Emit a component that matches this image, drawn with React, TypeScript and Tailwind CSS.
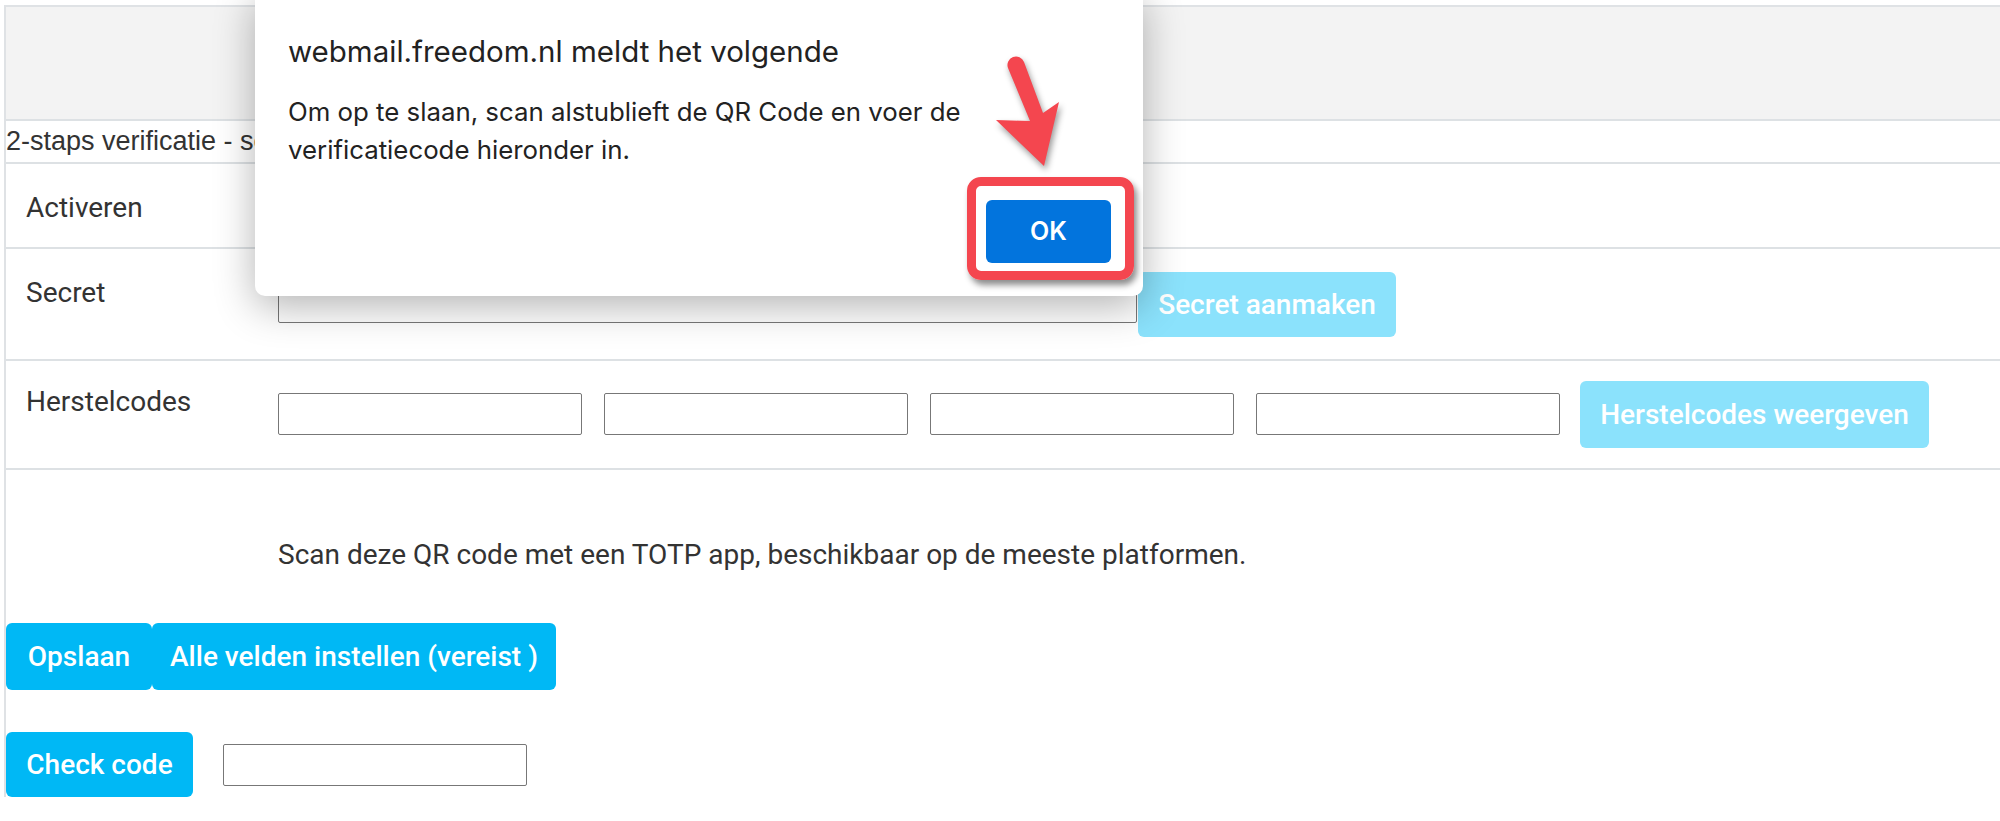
import React from 'react'

const Field = ({ className = '' }: { className?: string }) => (
  <input type="text" className={`h-[42px] rounded-[2px] border-[1.5px] border-[#777] bg-white ${className}`} />
)

export default function App() {
  return (
    <div className="relative h-[821px] w-[2000px] overflow-hidden bg-white font-['Roboto',sans-serif] text-[28px] text-[#333]">
      {/* page behind the alert */}
      <div className="ml-[4px] mt-[5px] border-l-2 border-t-2 border-[#dfe2e5]">
        <div className="h-[114px] border-b-2 border-[#dde1e4] bg-[#f3f3f3]"></div>

        <div className="flex h-[43px] items-center border-b-2 border-[#dde1e4]">
          <div className="w-[249px] overflow-hidden whitespace-nowrap font-['Liberation_Sans',Arial,sans-serif] text-[27px] leading-none">
            2-staps verificatie - secret
          </div>
        </div>

        <div className="flex h-[85px] border-b-2 border-[#dde1e4] pl-[20px] pt-[23px]">
          <div className="w-[252px] leading-[42px]">Activeren</div>
        </div>

        <div className="flex h-[112px] border-b-2 border-[#dde1e4] pl-[20px] pt-[23px]">
          <div className="w-[252px] leading-[42px]">Secret</div>
          <div className="flex items-start">
            <Field className="mt-[9px] w-[859px]" />
            <button className="ml-[1px] h-[65px] w-[258px] rounded-[6px] bg-[#8be2fc] font-medium text-white">
              Secret aanmaken
            </button>
          </div>
        </div>

        <div className="flex h-[109px] border-b-2 border-[#dde1e4] pl-[20px] pt-[20px]">
          <div className="w-[252px] leading-[42px]">Herstelcodes</div>
          <div className="flex items-start">
            <div className="mt-[12px] flex gap-[22px]">
              <Field className="w-[304px]" />
              <Field className="w-[304px]" />
              <Field className="w-[304px]" />
              <Field className="w-[304px]" />
            </div>
            <button className="ml-[20px] h-[67px] w-[349px] rounded-[6px] bg-[#8be2fc] font-medium text-white">
              Herstelcodes weergeven
            </button>
          </div>
        </div>

        <div className="pl-[272px] pt-[64px] leading-[42px]">
          Scan deze QR code met een TOTP app, beschikbaar op de meeste platformen.
        </div>

        <div className="mt-[47px] flex">
          <button className="h-[67px] w-[146px] rounded-[6px] bg-[#00b8f5] font-medium text-white">Opslaan</button>
          <button className="h-[67px] w-[404px] rounded-[6px] bg-[#00b8f5] font-medium text-white">
            Alle velden instellen (vereist )
          </button>
        </div>

        <div className="mt-[42px] flex items-center gap-[30px]">
          <button className="h-[65px] w-[187px] rounded-[6px] bg-[#00b8f5] font-medium text-white">Check code</button>
          <Field className="w-[304px]" />
        </div>
      </div>

      {/* browser alert */}
      <div className="absolute left-[255px] top-[-10px] flex h-[306px] w-[888px] flex-col rounded-[10px] bg-white pl-[33px] pr-[32px] pt-[41px] font-['Inter',sans-serif] text-[#222] shadow-[0_10px_40px_rgba(0,0,0,0.3)]">
        <div className="text-[29.5px] leading-[40px]">webmail.freedom.nl meldt het volgende</div>
        <div className="mt-[22px] text-[25.8px] leading-[38px]">
          Om op te slaan, scan alstublieft de QR Code en voer de
          <br />
          verificatiecode hieronder in.
        </div>
        <div className="mt-[31px] flex justify-end">
          <button className="h-[63px] w-[125px] rounded-[6px] bg-[#0274dd] text-[25px] font-semibold text-white">OK</button>
        </div>
      </div>

      {/* annotation */}
      <div className="absolute left-[967px] top-[177px] h-[103px] w-[167px] rounded-[14px] border-[9px] border-[#f4464f] shadow-[3px_5px_6px_rgba(0,0,0,0.45)]"></div>
      <svg
        className="absolute left-[990px] top-[50px] h-[125px] w-[80px] drop-shadow-[2px_4px_3px_rgba(0,0,0,0.4)]"
        viewBox="990 50 80 125"
      >
        <path d="M1008 68 A8.5 8.5 0 0 1 1024 62 L1043 113 L1059 102 L1044 166 L996 120 L1030 121 Z" fill="#f4464f" />
      </svg>
    </div>
  )
}
